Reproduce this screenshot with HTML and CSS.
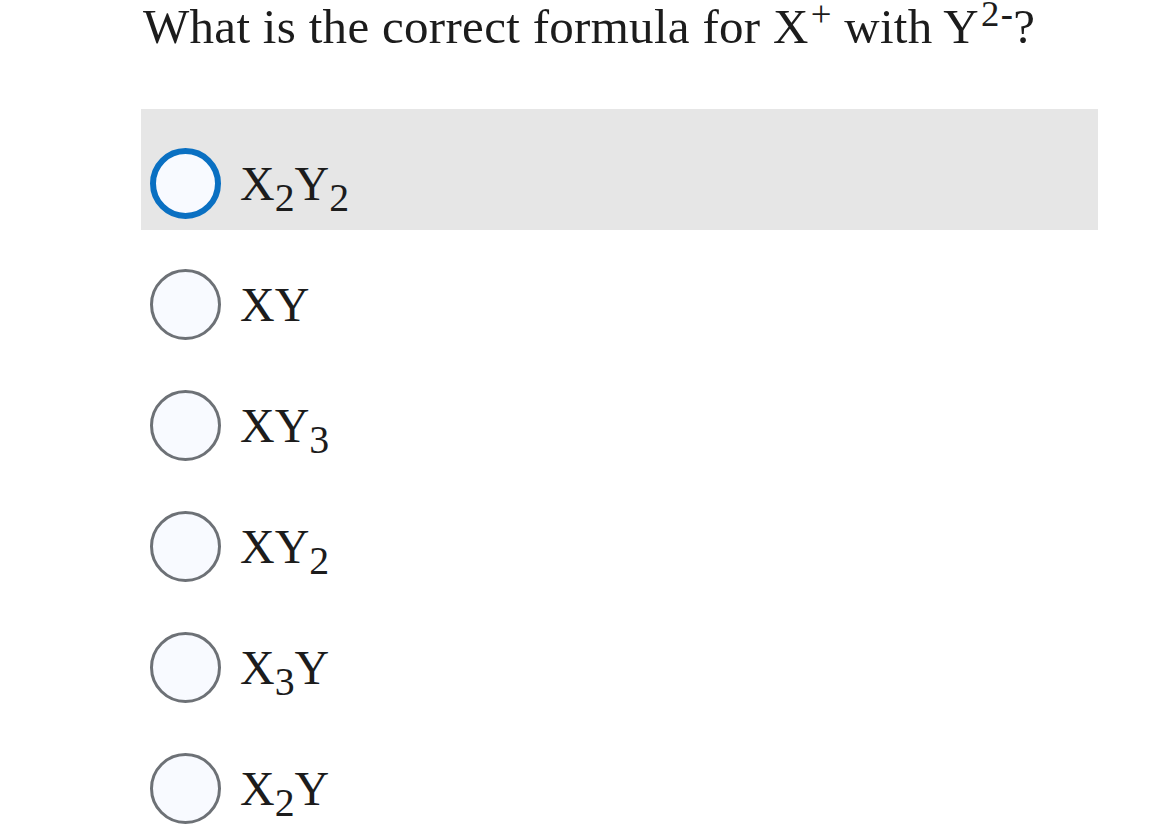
FILE: index.html
```html
<!DOCTYPE html>
<html>
<head>
<meta charset="utf-8">
<link rel="stylesheet" href="styles.css">
</head>
<body>
<div class="quiz">
  <h1 class="question">What is the correct formula for X<sup>+</sup> with Y<sup>2<span class="minus">-</span></sup>?</h1>
  <div class="options">
    <label class="option selected"><span class="radio"></span><span class="text">X<sub>2</sub>Y<sub>2</sub></span></label>
    <label class="option"><span class="radio"></span><span class="text">XY</span></label>
    <label class="option"><span class="radio"></span><span class="text">XY<sub>3</sub></span></label>
    <label class="option"><span class="radio"></span><span class="text">XY<sub>2</sub></span></label>
    <label class="option"><span class="radio"></span><span class="text">X<sub>3</sub>Y</span></label>
    <label class="option"><span class="radio"></span><span class="text">X<sub>2</sub>Y</span></label>
  </div>
</div>
</body>
</html>
```
FILE: styles.css
```css
html, body {
  margin: 0;
  padding: 0;
  background: #ffffff;
}
body {
  font-family: "Liberation Serif", "Times New Roman", serif;
  color: #1c1c1c;
}
.quiz {
  width: 957px;
  margin-left: 141px;
}
.question {
  margin: 0;
  padding: 0 0 0 2px;
  font-size: 49px;
  font-weight: normal;
  line-height: 54px;
  height: 109px;
  box-sizing: border-box;
  white-space: nowrap;
  letter-spacing: 0.3px;
}
.question sup {
  font-size: 0.75em;
  line-height: 0;
  vertical-align: 0.45em;
  margin-left: 2px;
}
.question .minus {
  font-weight: bold;
  margin-left: 1px;
}
.options {
  display: flex;
  flex-direction: column;
}
.option {
  display: flex;
  align-items: center;
  height: 121px;
  padding: 28px 0 0 9px;
  box-sizing: border-box;
}
.option.selected {
  background: #e6e6e6;
}
.radio {
  width: 71px;
  height: 71px;
  box-sizing: border-box;
  border-radius: 50%;
  border: 3px solid #6d7176;
  background: #f8faff;
  flex: none;
}
.selected .radio {
  border: 6px solid #0a70c2;
}
.text {
  margin-left: 19px;
  font-size: 48px;
  line-height: 1;
}
.text sub {
  font-size: 0.83em;
  line-height: 0;
}
```
